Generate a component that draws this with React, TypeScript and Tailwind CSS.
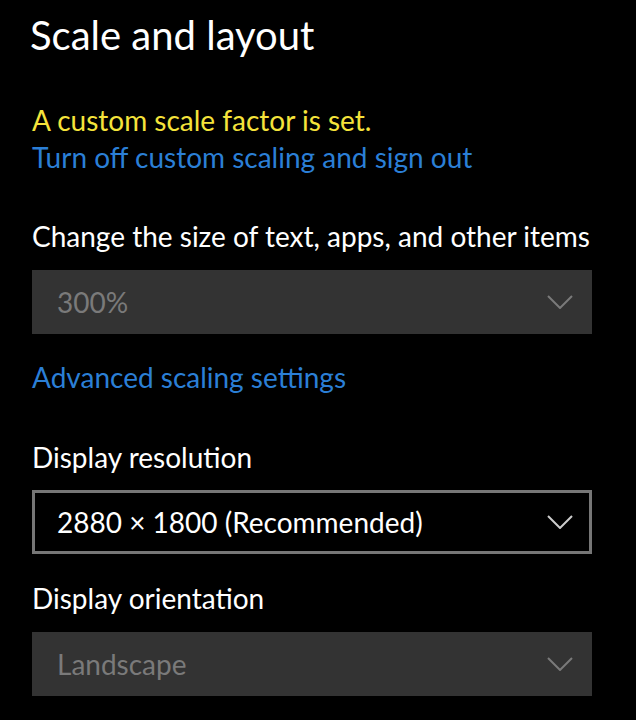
import React from "react";

const Chevron = ({ color }: { color: string }) => (
  <svg width="26" height="14" viewBox="0 0 26 14" fill="none">
    <polyline points="1,1 13,13 25,1" stroke={color} strokeWidth="2" />
  </svg>
);

const Select = ({
  value,
  disabled,
}: {
  value: string;
  disabled?: boolean;
}) => {
  return (
    <div
      className={
        disabled
          ? "flex items-center justify-between h-[64px] w-[560px] bg-[#333333] pl-[25px] pr-[19px]"
          : "flex items-center justify-between h-[64px] w-[560px] border-[3px] border-[#767676] pl-[22px] pr-[16px]"
      }
    >
      <span className={disabled ? "text-[#7a7a7a]" : "text-white"}>{value}</span>
      <Chevron color={disabled ? "#7a7a7a" : "#cccccc"} />
    </div>
  );
};

export default function App() {
  return (
    <div className="min-h-[720px] w-[636px] bg-black text-white font-['Lato','Noto_Sans',sans-serif] text-[28px] leading-[37px]">
      <div className="px-[32px] pt-[11px]">
        <h1 className="-ml-[2px] text-[40px] leading-[48px] font-normal">Scale and layout</h1>

        <div className="mt-[43px]">
          <p className="text-[#f5e33b]">A custom scale factor is set.</p>
          <a className="block text-[#2b7fd6]">Turn off custom scaling and sign out</a>
        </div>

        <p className="mt-[42px] mb-[15px]">Change the size of text, apps, and other items</p>
        <Select value="300%" disabled />

        <a className="block mt-[25px] text-[#2b7fd6]">Advanced scaling settings</a>

        <p className="mt-[43px] mb-[14px]">Display resolution</p>
        <Select value="2880 × 1800 (Recommended)" />

        <p className="mt-[26px] mb-[15px]">Display orientation</p>
        <Select value="Landscape" disabled />
      </div>
    </div>
  );
}
